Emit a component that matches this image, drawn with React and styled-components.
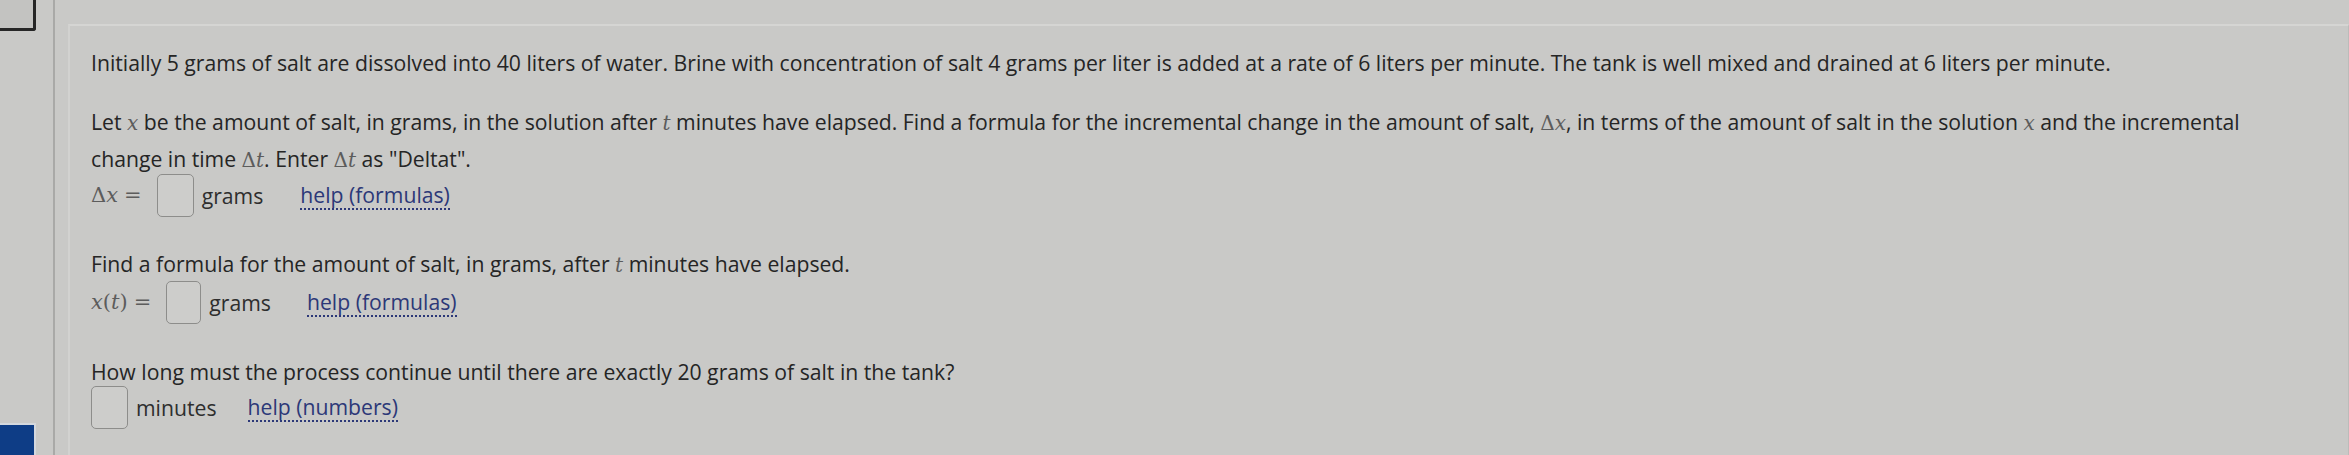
import React from "react";
import styled, { createGlobalStyle } from "styled-components";

const Global = createGlobalStyle`
  html, body { margin: 0; padding: 0; }
  body {
    background: #c9c9c7;
    width: 2349px;
    height: 455px;
    overflow: hidden;
    font-family: "Open Sans", "Noto Sans", sans-serif;
  }
`;

const Page = styled.div`
  display: flex;
  width: 2349px;
  height: 455px;
`;

const Sidebar = styled.div`
  width: 53px;
  height: 455px;
  border-right: 2px solid #a9a9a7;
  display: flex;
  flex-direction: column;
  justify-content: space-between;
  flex-shrink: 0;
`;

const TopTab = styled.div`
  width: 33px;
  height: 28px;
  background: #c3c3c1;
  border-right: 3px solid #262626;
  border-bottom: 3px solid #262626;
  border-bottom-right-radius: 3px;
`;

const BlueTab = styled.div`
  width: 34px;
  height: 30px;
  background: #0e3d86;
  border-top: 2px solid #d4d8de;
  border-right: 2px solid #d4d8de;
`;

const Panel = styled.div`
  margin: 24px 0 0 13px;
  width: 2262px;
  border-top: 2px solid #d5d5d3;
  border-left: 2px solid #d2d2d0;
  border-right: 1px solid #bcbcba;
  padding: 19px 0 0 21px;
  display: flex;
  flex-direction: column;
  color: #252525;
  font-size: 21.2px;
  line-height: 35px;
`;

const Para = styled.div`
  width: 2218px;
  margin-top: ${(p) => p.$gap || 0}px;
`;

const Row = styled.div`
  display: flex;
  align-items: center;
  height: 43px;
  margin-top: ${(p) => p.$gap || 0}px;
`;

const M = styled.span`
  font-family: "DejaVu Serif", "Liberation Serif", serif;
  font-style: ${(p) => (p.$up ? "normal" : "italic")};
  color: #5c5c5c;
  font-size: 20px;
`;

const Eq = styled.span`
  display: flex;
  align-items: baseline;
  font-family: "DejaVu Serif", "Liberation Serif", serif;
  font-size: 21px;
  color: #5c5c5c;
  margin-right: 10px;
  white-space: nowrap;
`;

const EqSign = styled.span`
  margin: 0 5px 0 6px;
`;

const Box = styled.span`
  display: inline-block;
  box-sizing: border-box;
  width: ${(p) => p.$w || 36}px;
  height: 43px;
  border: 1.5px solid #8d8d8b;
  border-radius: 5px;
  background: #cdcdcb;
`;

const Unit = styled.span`
  margin-left: 8px;
  color: #2e2e2e;
`;

const Help = styled.a`
  margin-left: ${(p) => p.$gap || 36}px;
  color: #2c3878;
  text-decoration: none;
  line-height: 26px;
  border-bottom: 2.5px dotted #2c3878;
  cursor: pointer;
`;

const Ital = ({ children }) => <M>{children}</M>;
const Delta = ({ v }) => (
  <>
    <M $up>Δ</M>
    <M>{v}</M>
  </>
);

export default function App() {
  return (
    <>
      <Global />
      <Page>
        <Sidebar>
          <TopTab />
          <BlueTab />
        </Sidebar>
        <Panel>
          <Para>
            Initially 5 grams of salt are dissolved into 40 liters of water. Brine with concentration of salt 4 grams per
            liter is added at a rate of 6 liters per minute. The tank is well mixed and drained at 6 liters per minute.
          </Para>
          <Para $gap={24}>
            Let <Ital>x</Ital> be the amount of salt, in grams, in the solution after <Ital>t</Ital> minutes have elapsed.
            Find a formula for the incremental change in the amount of salt, <Delta v="x" />, in terms of the amount of
            salt in the solution <Ital>x</Ital> and the incremental change in time <Delta v="t" />. Enter{" "}
            <Delta v="t" /> as "Deltat".
          </Para>
          <Row $gap={-4}>
            <Eq>
              <span>Δ</span>
              <i>x</i>
              <EqSign>=</EqSign>
            </Eq>
            <Box $w={37} />
            <Unit>grams</Unit>
            <Help $gap={37}>help (formulas)</Help>
          </Row>
          <Para $gap={29}>
            Find a formula for the amount of salt, in grams, after <Ital>t</Ital> minutes have elapsed.
          </Para>
          <Row $gap={-2}>
            <Eq>
              <i>x</i>(<i>t</i>)<EqSign>=</EqSign>
            </Eq>
            <Box $w={35} />
            <Unit>grams</Unit>
            <Help $gap={36}>help (formulas)</Help>
          </Row>
          <Para $gap={30}>How long must the process continue until there are exactly 20 grams of salt in the tank?</Para>
          <Row $gap={-3}>
            <Box $w={37} />
            <Unit>minutes</Unit>
            <Help $gap={31}>help (numbers)</Help>
          </Row>
        </Panel>
      </Page>
    </>
  );
}
